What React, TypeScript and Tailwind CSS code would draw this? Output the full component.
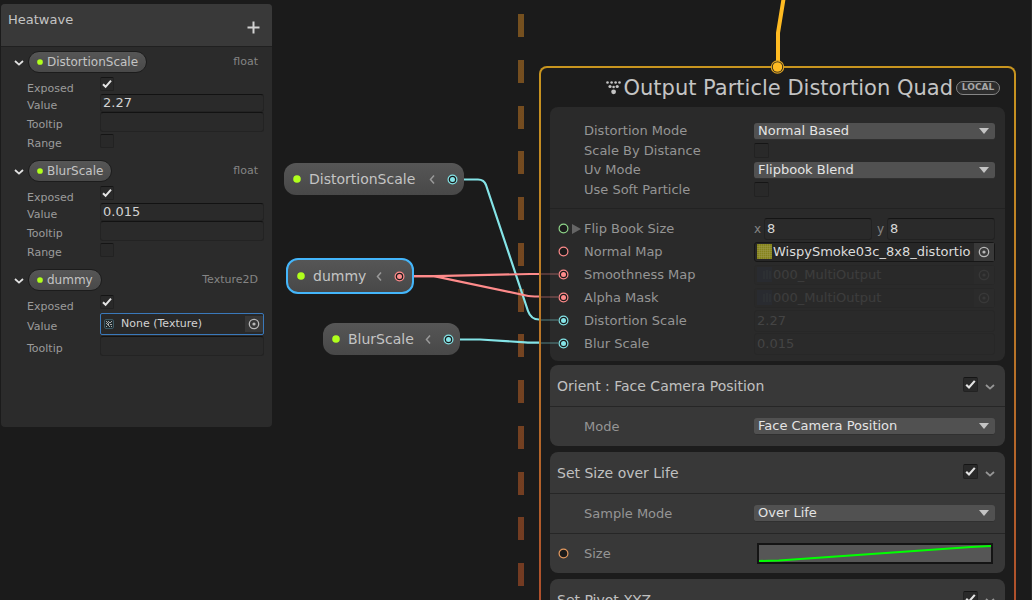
import React from 'react';

const GREEN = '#b0ff1c';
const TEAL = '#84e4e7';
const RED = '#ff8b8b';

interface PortProps {
  color: string;
  connected?: boolean;
}

const Port: React.FC<PortProps> = ({ color, connected }) => (
  <svg className="shrink-0" width="11" height="11" viewBox="0 0 11 11">
    <circle cx="5.5" cy="5.5" r="4.4" fill="#1b1b1b" stroke={color} strokeWidth="1.2" />
    {connected && <circle cx="5.5" cy="5.5" r="2.5" fill={color} />}
  </svg>
);

const Dot: React.FC<{ size: number }> = ({ size }) => (
  <svg className="shrink-0" width={size} height={size} viewBox="0 0 8 8">
    <circle cx="4" cy="4" r="3.8" fill={GREEN} />
  </svg>
);

interface CheckboxProps {
  id: string;
  label?: string;
  checked?: boolean;
  large?: boolean;
}

const Checkbox: React.FC<CheckboxProps> = ({ id, label, checked, large }) => (
  <span className={large ? 'relative block h-[15px] w-[15px] shrink-0' : 'relative block h-[14px] w-[14px] shrink-0'}>
    <input
      id={id}
      type="checkbox"
      aria-label={label}
      defaultChecked={checked}
      className="peer block h-full w-full appearance-none rounded-xs border border-[#222222] border-t-[#151515] bg-[#292929]"
    />
    <svg
      className="pointer-events-none absolute inset-0 hidden h-full w-full peer-checked:block"
      viewBox="0 0 14 14"
      fill="none"
      stroke="#e4e4e4"
      strokeWidth="2"
    >
      <path d="M3 7.2 L5.6 9.8 L11 3.6" />
    </svg>
  </span>
);

interface DropdownProps {
  id: string;
  value: string;
}

const Dropdown: React.FC<DropdownProps> = ({ id, value }) => (
  <div className="relative flex-1">
    <select
      id={id}
      className="block h-[17px] w-full appearance-none rounded-[3px] border-b border-[#303030] bg-[#515151] pl-1 text-[13px] leading-4 text-[#e4e4e4]"
    >
      <option>{value}</option>
    </select>
    <svg className="pointer-events-none absolute top-[5px] right-[6px]" width="10" height="6" viewBox="0 0 10 6">
      <path d="M0 0 H10 L5 6 Z" fill="#c4c4c4" />
    </svg>
  </div>
);

const PickerIcon: React.FC = () => (
  <svg width="12" height="12" viewBox="0 0 12 12" fill="none" stroke="#b8b8b8">
    <circle cx="6" cy="6" r="4.7" strokeWidth="1.3" />
    <circle cx="6" cy="6" r="1.6" fill="#b8b8b8" stroke="none" />
  </svg>
);

const SmokeThumb: React.FC = () => (
  <svg className="shrink-0" width="15" height="15" viewBox="0 0 15 15">
    <rect width="15" height="15" fill="#85831c" />
    <path
      d="M2.5 0V15M4.5 0V15M6.5 0V15M8.5 0V15M10.5 0V15M12.5 0V15M0 2.5H15M0 4.5H15M0 6.5H15M0 8.5H15M0 10.5H15M0 12.5H15"
      stroke="#a19f55"
      strokeWidth="0.4"
    />
  </svg>
);

const NoiseThumb: React.FC = () => (
  <svg className="shrink-0" width="15" height="15" viewBox="0 0 15 15">
    <rect width="15" height="15" fill="#263b63" />
    <path d="M7 4v8M10 3v9M13 4v8" stroke="#6d8fa5" />
  </svg>
);

const TextureIcon: React.FC = () => (
  <svg className="shrink-0" width="10" height="10" viewBox="0 0 10 10">
    <rect x="0.5" y="0.5" width="9" height="9" rx="1.5" fill="#202a2d" stroke="#3d5964" />
    <path
      d="M2 2h1v1H2zM4 2h1v1H4zM7 2h1v1H7zM3 3h1v1H3zM5 3h2v1H5zM2 4h1v1H2zM4 4h1v1H4zM6 5h2v1H6zM3 5h2v1H3zM2 7h1v1H2zM4 6h1v1H4zM5 7h1v1H5zM7 7h1v1H7z"
      fill="#a8a8a8"
    />
  </svg>
);

const ChevronDown: React.FC<{ color: string }> = ({ color }) => (
  <svg width="10" height="6" viewBox="0 0 10 6" fill="none" stroke={color} strokeWidth="1.8">
    <path d="M1 1 L5 4.6 L9 1" />
  </svg>
);

const panelInput =
  'block h-full w-full rounded-[3px] border border-[#232323] border-t-[#121212] bg-[#2a2a2a] px-0.5 pb-0.5 text-[13px] leading-[14px] text-[#d2d2d2]';

interface PanelRowProps {
  id: string;
  label: string;
  height: string;
  children: React.ReactNode;
}

const PanelRow: React.FC<PanelRowProps> = ({ id, label, height, children }) => (
  <div className={`flex ${height}`}>
    <label htmlFor={id} className="flex w-[73px] shrink-0 items-center pt-[6px] text-[11px] leading-3 text-[#9b9b9b]">
      {label}
    </label>
    <div className="h-full flex-1">{children}</div>
  </div>
);

interface PropertyProps {
  name: string;
  type: string;
  value?: string;
}

const Property: React.FC<PropertyProps> = ({ name, type, value }) => (
  <section className="pr-2 pb-[10px] pl-[13px]">
    <div className="mb-1 flex h-[22px] items-center">
      <button aria-label={`Collapse ${name}`} className="mr-1 pt-0.5">
        <ChevronDown color="#e2e2e2" />
      </button>
      <div className="flex h-[22px] items-center gap-1 rounded-full border border-[#1c1c1c] bg-linear-to-b from-[#565656] to-[#494949] px-2 text-xs text-[#c4c4c4]">
        <Dot size={6} />
        {name}
      </div>
      <span className="ml-auto pr-[6px] text-[11px] text-[#858585]">{type}</span>
    </div>
    <div className="pl-[13px]">
      <PanelRow id={`${name}-exposed`} label="Exposed" height="h-[17px]">
        <Checkbox id={`${name}-exposed`} checked />
      </PanelRow>
      {value ? (
        <PanelRow id={`${name}-value`} label="Value" height="h-[18px]">
          <input id={`${name}-value`} className={panelInput} defaultValue={value} />
        </PanelRow>
      ) : (
        <PanelRow id={`${name}-value`} label="Value" height="h-6">
          <div className="pt-px">
            <div className="flex h-[22px] items-center rounded-xs border border-[#3a79bb] bg-[#282828] pl-[3px]">
              <TextureIcon />
              <input
                id={`${name}-value`}
                readOnly
                className="ml-[7px] w-0 flex-1 bg-transparent text-[11px] text-[#d2d2d2]"
                defaultValue="None (Texture)"
              />
              <button aria-label="Pick texture" className="flex h-4 w-[18px] items-center justify-center bg-[#373737]">
                <PickerIcon />
              </button>
            </div>
          </div>
        </PanelRow>
      )}
      <PanelRow id={`${name}-tooltip`} label="Tooltip" height="h-5">
        <input id={`${name}-tooltip`} className={panelInput} />
      </PanelRow>
      {value && (
        <PanelRow id={`${name}-range`} label="Range" height="h-[18px]">
          <div className="pt-0.5">
            <Checkbox id={`${name}-range`} />
          </div>
        </PanelRow>
      )}
    </div>
  </section>
);

const Blackboard: React.FC = () => (
  <aside className="relative mt-1 ml-px min-h-[423px] w-[271px] rounded-[4px] bg-[#2b2b2b]">
    <header className="mb-1 flex h-[43px] items-center justify-between rounded-t-[4px] border-b border-[#202020] bg-[#393939] pr-3 pl-[7px]">
      <h1 className="pb-2.5 text-[13px] text-[#c4c4c4]">Heatwave</h1>
      <button aria-label="Add property" className="pt-1">
        <svg width="13" height="13" viewBox="0 0 13 13" stroke="#d2d2d2" strokeWidth="2">
          <path d="M6.5 0.5V12.5M0.5 6.5H12.5" />
        </svg>
      </button>
    </header>
    <Property name="DistortionScale" type="float" value="2.27" />
    <Property name="BlurScale" type="float" value="0.015" />
    <Property name="dummy" type="Texture2D" />
  </aside>
);

interface ParameterNodeProps {
  name: string;
  color: string;
  className: string;
}

const ParameterNode: React.FC<ParameterNodeProps> = ({ name, color, className }) => (
  <div
    className={`absolute flex items-center rounded-xl bg-linear-to-b from-[#565656] to-[#484848] text-sm text-[#c4c4c4] ${className}`}
  >
    <Dot size={8} />
    <span className="ml-2">{name}</span>
    <button aria-label={`Collapse ${name}`} className="mr-3 ml-auto">
      <svg width="6" height="9" viewBox="0 0 6 9" fill="none" stroke="#999999" strokeWidth="1.5">
        <path d="M5 0.5 L1.5 4.5 L5 8.5" />
      </svg>
    </button>
    <Port color={color} connected />
  </div>
);

interface SlotRowProps {
  id: string;
  label: string;
  port?: string;
  connected?: boolean;
  expandable?: boolean;
  height: string;
  children: React.ReactNode;
}

const SlotRow: React.FC<SlotRowProps> = ({ id, label, port, connected, expandable, height, children }) => (
  <div className={`flex items-center pr-[10px] pl-2 ${height}`}>
    <div className="flex w-[26px] shrink-0 items-center gap-[3px]">
      {port && <Port color={port} connected={connected} />}
      {expandable && (
        <svg width="9" height="10" viewBox="0 0 9 10">
          <path d="M0 0 L9 5 L0 10 Z" fill="#656565" />
        </svg>
      )}
    </div>
    <label htmlFor={id} className="w-[170px] shrink-0 text-[13px] leading-4 text-[#959595]">
      {label}
    </label>
    {children}
  </div>
);

interface ObjectFieldProps {
  id: string;
  value: string;
  disabled?: boolean;
}

const ObjectField: React.FC<ObjectFieldProps> = ({ id, value, disabled }) => (
  <div
    className={`flex h-5 flex-1 items-center rounded-[3px] border border-[#161616] bg-[#272727] pl-0.5 ${disabled ? 'opacity-10' : ''}`}
  >
    {disabled ? <NoiseThumb /> : <SmokeThumb />}
    <input
      id={id}
      readOnly
      disabled={disabled}
      className="ml-px w-0 flex-1 bg-transparent text-[13px] text-[#dcdcdc]"
      defaultValue={value}
    />
    <button aria-label="Pick texture" disabled={disabled} className="flex h-[18px] w-5 items-center justify-center bg-[#393939]">
      <PickerIcon />
    </button>
  </div>
);

const slotInput =
  'h-[22px] w-0 flex-1 rounded-[3px] border border-[#222222] border-t-[#141414] bg-[#2a2a2a] px-0.5 text-[13px] text-[#d8d8d8]';

const disabledInput =
  'h-[22px] w-0 flex-1 rounded-[3px] border border-[#272727] bg-transparent px-0.5 text-[13px] text-[#444444]';

interface BlockProps {
  title: string;
  children?: React.ReactNode;
}

const Block: React.FC<BlockProps> = ({ title, children }) => (
  <section className="rounded-lg bg-[#383838]">
    <header className="flex h-[41px] items-center pr-[10px] pl-[7px]">
      <h3 className="text-sm text-[#c0c0c0]">{title}</h3>
      <div className="ml-auto flex items-center gap-[7px] pb-0.5">
        <Checkbox id={`${title}-enabled`} label={`Enable ${title}`} checked large />
        <button aria-label={`Collapse ${title}`} className="pt-1">
          <ChevronDown color="#969696" />
        </button>
      </div>
    </header>
    {children}
  </section>
);

const OutputContext: React.FC = () => (
  <div className="absolute top-[66px] left-[539px] w-[477px] rounded-lg bg-linear-to-b from-[#c8951f] via-[#b87428] via-50% to-[#ad4a2c] p-[2px]">
    <div className="rounded-md bg-[#1c1c1c] px-[9px] pb-3">
      <header className="flex h-[39px] items-center justify-end gap-[3px] pr-[5px]">
        <svg width="15" height="14" viewBox="0 0 15 14" fill="#c4c4c4">
          <circle cx="1.5" cy="1.5" r="1.3" />
          <circle cx="5.6" cy="1.5" r="1.3" />
          <circle cx="9.6" cy="1.5" r="1.3" />
          <circle cx="13.5" cy="1.5" r="1.3" />
          <circle cx="4" cy="5.5" r="1.6" />
          <circle cx="7.6" cy="6" r="1.3" />
          <circle cx="11.2" cy="5.5" r="1.6" />
          <circle cx="7.6" cy="10.8" r="2.4" />
        </svg>
        <h2 className="text-[21px] leading-6 whitespace-nowrap text-[#c4c4c4]">Output Particle Distortion Quad</h2>
        <span className="flex h-[14px] w-11 items-center justify-center rounded-full border border-[#858585] bg-[#2d2d2d] text-[9px] font-bold text-[#a6a6a6]">
          LOCAL
        </span>
      </header>
      <div className="flex flex-col gap-1">
        <section className="rounded-lg bg-[#2a2a2a] pb-[6px]">
          <div className="border-b border-[#222222] pt-[14px] pb-[9px]">
            <SlotRow id="distortion-mode" label="Distortion Mode" height="h-5">
              <Dropdown id="distortion-mode" value="Normal Based" />
            </SlotRow>
            <SlotRow id="scale-by-distance" label="Scale By Distance" height="h-[19px]">
              <Checkbox id="scale-by-distance" large />
            </SlotRow>
            <SlotRow id="uv-mode" label="Uv Mode" height="h-5">
              <Dropdown id="uv-mode" value="Flipbook Blend" />
            </SlotRow>
            <SlotRow id="soft-particle" label="Use Soft Particle" height="h-[19px]">
              <Checkbox id="soft-particle" large />
            </SlotRow>
          </div>
          <div className="pt-2">
            <SlotRow id="flip-x" label="Flip Book Size" port="#8fd68a" expandable height="h-[23px]">
              <div className="flex flex-1 items-center gap-[3px] text-xs text-[#858585]">
                <label htmlFor="flip-x">x</label>
                <input id="flip-x" className={slotInput} defaultValue="8" />
                <label htmlFor="flip-y" className="pl-0.5">y</label>
                <input id="flip-y" className={slotInput} defaultValue="8" />
              </div>
            </SlotRow>
            <SlotRow id="normal-map" label="Normal Map" port={RED} height="h-[23px]">
              <ObjectField id="normal-map" value="WispySmoke03c_8x8_distortio" />
            </SlotRow>
            <SlotRow id="smoothness-map" label="Smoothness Map" port={RED} connected height="h-[23px]">
              <ObjectField id="smoothness-map" value="000_MultiOutput" disabled />
            </SlotRow>
            <SlotRow id="alpha-mask" label="Alpha Mask" port={RED} connected height="h-[23px]">
              <ObjectField id="alpha-mask" value="000_MultiOutput" disabled />
            </SlotRow>
            <SlotRow id="distortion-scale" label="Distortion Scale" port={TEAL} connected height="h-[23px]">
              <input id="distortion-scale" disabled className={disabledInput} defaultValue="2.27" />
            </SlotRow>
            <SlotRow id="blur-scale" label="Blur Scale" port={TEAL} connected height="h-[23px]">
              <input id="blur-scale" disabled className={disabledInput} defaultValue="0.015" />
            </SlotRow>
          </div>
        </section>
        <div className="flex flex-col gap-[6px]">
          <Block title="Orient : Face Camera Position">
            <div className="border-t border-[#262626]">
              <SlotRow id="orient-mode" label="Mode" height="h-[39px]">
                <Dropdown id="orient-mode" value="Face Camera Position" />
              </SlotRow>
            </div>
          </Block>
          <Block title="Set Size over Life">
            <div className="border-t border-[#262626]">
              <SlotRow id="sample-mode" label="Sample Mode" height="h-[39px]">
                <Dropdown id="sample-mode" value="Over Life" />
              </SlotRow>
            </div>
            <div className="border-t border-[#262626]">
              <SlotRow id="size-curve" label="Size" port="#e59a5f" height="h-[39px]">
                <button
                  id="size-curve"
                  className="mr-0.5 ml-[3px] h-[21px] flex-1 border-2 border-[#141414] bg-[#565656]"
                >
                  <svg className="block h-full w-full" viewBox="0 0 232 17" preserveAspectRatio="none">
                    <path d="M0 16 L20 15.5 L212 2 L232 1" fill="none" stroke="#00ff00" strokeWidth="2" />
                  </svg>
                </button>
              </SlotRow>
            </div>
          </Block>
          <Block title="Set Pivot XYZ" />
        </div>
      </div>
    </div>
  </div>
);

const Wires: React.FC = () => (
  <svg className="absolute inset-0 h-full w-full" fill="none">
    <defs>
      <linearGradient id="dash" gradientUnits="userSpaceOnUse" x1="0" y1="0" x2="0" y2="600">
        <stop offset="0" stopColor="#75511f" />
        <stop offset="1" stopColor="#733a22" />
      </linearGradient>
    </defs>
    <rect x="1031" y="0" width="1" height="600" fill="#2b2b2b" />
    <g fill="url(#dash)">
      {Array.from({ length: 13 }, (_, i) => (
        <rect key={i} x="518" y={Math.round(14 + i * 45.75)} width="6" height="23" />
      ))}
    </g>
    <g strokeWidth="2.2">
      <path d="M463 179.5 H478 Q484 179.5 486 185 L528 311 Q531 319.5 539 319.5" stroke={TEAL} />
      <path d="M460 339.5 H480 L525 342.3 Q530 342.7 539 342.7" stroke={TEAL} />
      <path d="M413 276.2 H434 L530 274 H539" stroke={RED} />
      <path d="M413 276.2 H434 L526 295.5 Q530 296.5 539 296.5" stroke={RED} />
    </g>
  </svg>
);

// Wire ends seen through the context's frame, and the flow link above its anchor.
const WireEnds: React.FC = () => (
  <svg className="pointer-events-none absolute inset-0 h-full w-full" fill="none">
    <g strokeWidth="2" opacity="0.25">
      <path d="M541 274 H558M541 297 H558" stroke={RED} />
      <path d="M541 320 H558M541 343 H558" stroke={TEAL} />
    </g>
    <path d="M784 -4 L778 33 V62" stroke="#ffbb22" strokeWidth="4" />
    <circle cx="777.5" cy="67" r="6.2" fill="#1c1c1c" stroke="#dca223" strokeWidth="1.2" />
    <circle cx="777.5" cy="67" r="4.8" fill="#ffbb22" />
  </svg>
);

const App: React.FC = () => {
  return (
    <main className="relative h-screen overflow-hidden bg-[#1b1b1b] font-['DejaVu_Sans',sans-serif]">
      <Wires />
      <ParameterNode name="DistortionScale" color={TEAL} className="top-[163px] left-[284px] h-8 w-[180px] pr-[6px] pl-[9px]" />
      <ParameterNode
        name="dummy"
        color={RED}
        className="top-[258px] left-[286px] h-9 w-32 border-2 border-[#44b6fb] pr-[7px] pl-[9px]"
      />
      <ParameterNode name="BlurScale" color={TEAL} className="top-[323px] left-[323px] h-8 w-[137px] pr-[6px] pl-[9px]" />
      <OutputContext />
      <WireEnds />
      <Blackboard />
    </main>
  );
};

export default App;
